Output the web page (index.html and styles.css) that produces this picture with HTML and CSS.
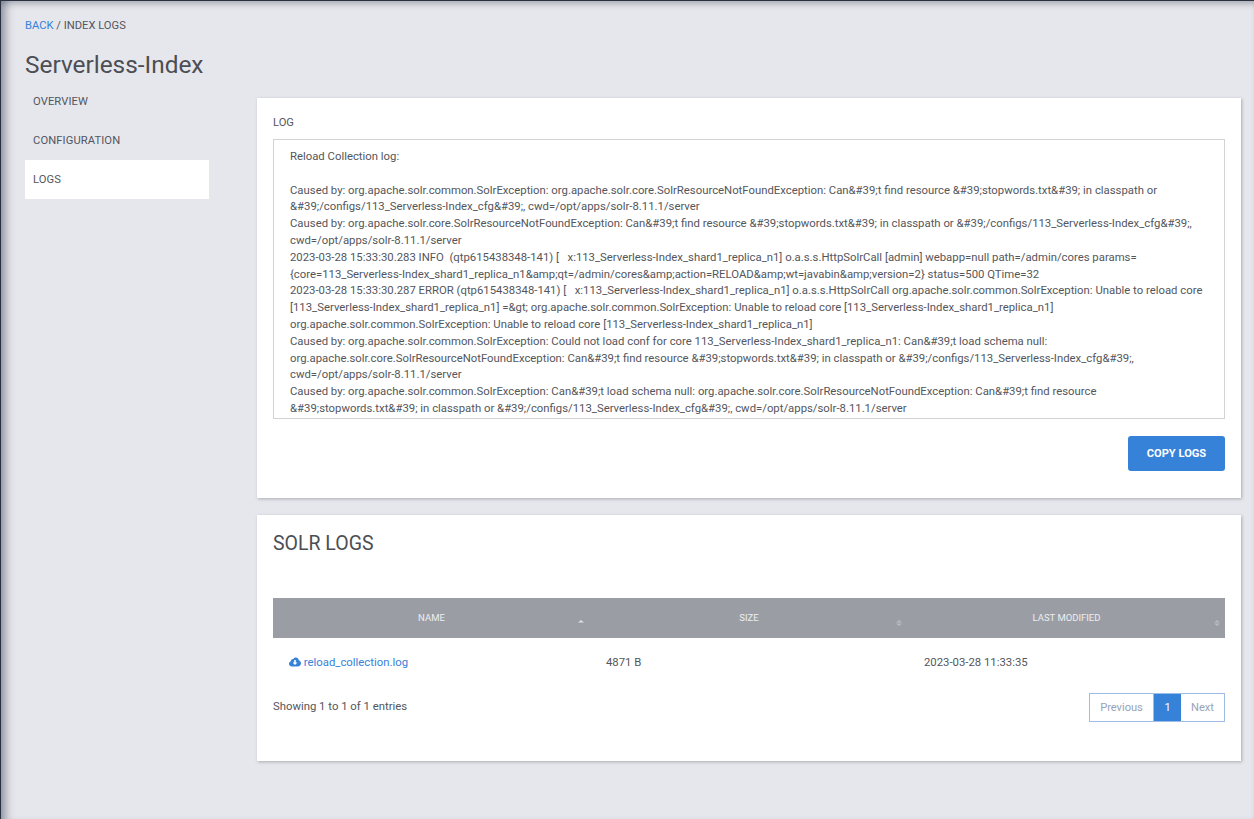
FILE: index.html
```html
<!DOCTYPE html>
<html lang="en">
<head>
<meta charset="utf-8">
<title>Serverless-Index</title>
<link rel="stylesheet" href="styles.css">
</head>
<body>
<div class="page">
  <nav class="crumbs"><a href="#">BACK</a> / INDEX LOGS</nav>
  <h1 class="title">Serverless-Index</h1>
  <div class="layout">
    <ul class="side">
      <li class="side-item">OVERVIEW</li>
      <li class="side-item">CONFIGURATION</li>
      <li class="side-item active">LOGS</li>
    </ul>
    <main class="content">
      <section class="card card-log">
        <div class="log-label">LOG</div>
        <div class="log-box"><div class="log-text">Reload Collection log:<br><br>Caused by: org.apache.solr.common.SolrException: org.apache.solr.core.SolrResourceNotFoundException: Can&amp;#39;t find resource &amp;#39;stopwords.txt&amp;#39; in classpath or &amp;#39;/configs/113_Serverless-Index_cfg&amp;#39;, cwd=/opt/apps/solr-8.11.1/server<br>Caused by: org.apache.solr.core.SolrResourceNotFoundException: Can&amp;#39;t find resource &amp;#39;stopwords.txt&amp;#39; in classpath or &amp;#39;/configs/113_Serverless-Index_cfg&amp;#39;, cwd=/opt/apps/solr-8.11.1/server<br>2023-03-28 15:33:30.283 INFO&nbsp; (qtp615438348-141) [ &nbsp; x:113_Serverless-Index_shard1_replica_n1] o.a.s.s.HttpSolrCall [admin] webapp=null path=/admin/cores params={core=113_Serverless-Index_shard1_replica_n1&amp;amp;qt=/admin/cores&amp;amp;action=RELOAD&amp;amp;wt=javabin&amp;amp;version=2} status=500 QTime=32<br>2023-03-28 15:33:30.287 ERROR (qtp615438348-141) [ &nbsp; x:113_Serverless-Index_shard1_replica_n1] o.a.s.s.HttpSolrCall org.apache.solr.common.SolrException: Unable to reload core [113_Serverless-Index_shard1_replica_n1] =&amp;gt; org.apache.solr.common.SolrException: Unable to reload core [113_Serverless-Index_shard1_replica_n1]<br>org.apache.solr.common.SolrException: Unable to reload core [113_Serverless-Index_shard1_replica_n1]<br>Caused by: org.apache.solr.common.SolrException: Could not load conf for core 113_Serverless-Index_shard1_replica_n1: Can&amp;#39;t load schema null: org.apache.solr.core.SolrResourceNotFoundException: Can&amp;#39;t find resource &amp;#39;stopwords.txt&amp;#39; in classpath or &amp;#39;/configs/113_Serverless-Index_cfg&amp;#39;, cwd=/opt/apps/solr-8.11.1/server<br>Caused by: org.apache.solr.common.SolrException: Can&amp;#39;t load schema null: org.apache.solr.core.SolrResourceNotFoundException: Can&amp;#39;t find resource &amp;#39;stopwords.txt&amp;#39; in classpath or &amp;#39;/configs/113_Serverless-Index_cfg&amp;#39;, cwd=/opt/apps/solr-8.11.1/server</div></div>
        <div class="log-actions"><button class="btn-copy" type="button">COPY LOGS</button></div>
      </section>
      <section class="card card-solr">
        <h2 class="solr-title">SOLR LOGS</h2>
        <div class="thead">
          <div class="th">NAME<svg class="sort" width="6" height="8" viewBox="0 0 6 8"><path class="on" d="M0 3.500 3 1l3 2.500z"/></svg></div>
          <div class="th">SIZE<svg class="sort" width="6" height="8" viewBox="0 0 6 8"><path d="M0 3.500 3 1l3 2.500zM0 4.500h6L3 7z"/></svg></div>
          <div class="th">LAST MODIFIED<svg class="sort sort-last" width="6" height="8" viewBox="0 0 6 8"><path d="M0 3.500 3 1l3 2.500zM0 4.500h6L3 7z"/></svg></div>
        </div>
        <div class="trow">
          <div class="td"><a class="file" href="#"><svg class="cloud" width="12" height="10" viewBox="0 0 12 10"><path fill-rule="evenodd" d="M3 9.600C1.300 9.600 0 8.400 0 6.800c0-1.200.7-2.200 1.800-2.600C1.900 2.900 3 2 4.200 2.100 4.800.9 5.800.4 6.800.4c1.600 0 2.900 1.200 3 2.800C11.100 3.700 12 4.900 12 6.300c0 1.800-1.400 3.300-3.200 3.300H3zM5.200 2.900v2.700H3.600L6 8l2.400-2.400H6.800V2.900H5.200z"/></svg> reload_collection.log</a></div>
          <div class="td">4871 B</div>
          <div class="td">2023-03-28 11:33:35</div>
        </div>
        <div class="tfoot">
          <div class="info">Showing 1 to 1 of 1 entries</div>
          <div class="pager">
            <span class="pg pg-prev">Previous</span>
            <span class="pg pg-cur">1</span>
            <span class="pg pg-next">Next</span>
          </div>
        </div>
      </section>
    </main>
  </div>
</div>
</body>
</html>
```
FILE: styles.css
```css
* { box-sizing: border-box; }
html, body { height: 100%; }
body {
  margin: 0;
  background: #e6e7ec;
  color: #54565c;
  font-family: Roboto, "Liberation Sans", sans-serif;
  font-size: 12px;
  line-height: 1.4;
  overflow: hidden;
  border-top: 1px solid #2a3242;
  border-left: 1px solid #2a3242;
  box-shadow: inset 11px 0 9px -6px rgba(40,50,70,.42), inset 0 6px 6px -3px rgba(40,50,70,.3);
}
.page { padding: 17px 13px 0 24px; }
.crumbs { font-size: 11.2px; line-height: 16px; color: #54565c; }
.crumbs a { color: #3582d8; text-decoration: none; }
.title {
  margin: 15px 0 0;
  font-size: 24.4px;
  font-weight: 400;
  line-height: 32px;
  color: #4c4e54;
}
.layout { display: flex; align-items: flex-start; gap: 48px; margin-top: 1px; }
.side { list-style: none; margin: 0; padding: 0; width: 184px; flex: none; }
.side-item {
  height: 39px;
  padding-left: 8px;
  line-height: 39px;
  font-size: 11.2px;
  letter-spacing: .1px;
}
.side-item.active { background: #fff; }
.content { flex: 1; min-width: 0; padding-top: 16px; }
.card { background: #fff; box-shadow: 1px 1px 3px rgba(60,60,70,.35); padding: 0 16px; }
.card-log { height: 400px; padding-top: 17px; margin-bottom: 17px; }
.log-label { font-size: 11.2px; line-height: 16px; }
.log-box {
  margin-top: 8px;
  height: 280px;
  border: 1px solid #d3d3d3;
  overflow: hidden;
  padding: 8px 16px;
}
.log-text { font-size: 11.34px; line-height: 16.8px; }
.log-actions { display: flex; justify-content: flex-end; margin-top: 17px; }
.btn-copy {
  width: 97px;
  height: 35px;
  border: 0;
  border-radius: 3px;
  background: #3582d8;
  color: #fff;
  font: 700 11.1px Roboto, sans-serif;
  padding: 0;
}
.card-solr { height: 246px; padding-top: 15px; }
.solr-title { margin: 0; font-size: 19.5px; font-weight: 400; line-height: 28px; color: #4c4e54; }
.thead { display: grid; grid-template-columns: 317px 318px 317px; height: 40px; margin-top: 40px; background: #9b9da5; }
.th {
  position: relative;
  display: flex;
  align-items: center;
  justify-content: center;
  font-size: 9.5px;
  color: #eceef0;
  padding-bottom: 1px;
}
.sort { position: absolute; right: 6px; top: 21px; fill: #b8bac0; }
.sort-last { right: 5px; }
.sort .on { fill: #dfe1e5; }
.trow { display: grid; grid-template-columns: 317px 318px 317px; height: 49px; align-items: center; padding-top: 1px; font-size: 11.34px; }
.td { padding-left: 16px; }
.file { color: #3582d8; text-decoration: none; }
.cloud { fill: #3582d8; vertical-align: -1px; }
.tfoot { display: flex; justify-content: space-between; align-items: flex-start; margin-top: 6px; font-size: 11.34px; }
.info { padding-top: 5px; line-height: 16px; }
.pager { display: flex; height: 29px; border: 1px solid #9dbde6; }
.pg { display: flex; align-items: center; justify-content: center; color: #97a3b8; font-size: 11.1px; }
.pg-prev { width: 64px; border-right: 1px solid #9dbde6; }
.pg-cur { width: 27px; background: #3582d8; color: #fff; }
.pg-next { width: 43px; }
```
